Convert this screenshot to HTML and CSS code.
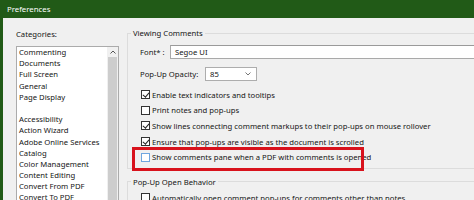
FILE: index.html
```html
<!DOCTYPE html>
<html lang="en">
<head>
    <meta charset="UTF-8">
    <meta name="viewport" content="width=device-width, initial-scale=1.0">
    <title>Preferences</title>
    <link rel="stylesheet" href="styles.css">
</head>
<body>
    <div class="window">
        <div class="titlebar">Preferences</div>
        <div class="content">
            <!-- Left column: category list -->
            <div class="categories">
                <div class="cat-label">Categories:</div>
                <div class="listbox">
                    <ul class="cat-list">
                        <li class="selected">Commenting</li>
                        <li>Documents</li>
                        <li>Full Screen</li>
                        <li>General</li>
                        <li>Page Display</li>
                        <li class="spacer"></li>
                        <li>Accessibility</li>
                        <li>Action Wizard</li>
                        <li>Adobe Online Services</li>
                        <li>Catalog</li>
                        <li>Color Management</li>
                        <li>Content Editing</li>
                        <li>Convert From PDF</li>
                        <li>Convert To PDF</li>
                    </ul>
                    <div class="scrollbar">
                        <div class="scroll-up">
                            <svg width="6" height="4" viewBox="0 0 6 4"><path d="M0.5 3.5 L3 1 L5.5 3.5" fill="none" stroke="#555" stroke-width="1"/></svg>
                        </div>
                        <div class="thumb"></div>
                    </div>
                </div>
            </div>

            <!-- Right column: settings -->
            <div class="settings">
                <fieldset class="group">
                    <legend>Viewing Comments</legend>
                    <div class="field-row font-row">
                        <span class="field-label font-label">Font* :</span>
                        <div class="textbox">Segoe UI</div>
                    </div>
                    <div class="field-row opacity-row">
                        <span class="field-label opacity-label">Pop-Up Opacity:</span>
                        <div class="select">
                            <span>85</span>
                            <svg width="6" height="4" viewBox="0 0 6 4"><path d="M0.5 0.5 L3 3 L5.5 0.5" fill="none" stroke="#666" stroke-width="0.9"/></svg>
                        </div>
                    </div>
                    <label class="check"><span class="box checked"></span>Enable text indicators and tooltips</label>
                    <label class="check"><span class="box"></span>Print notes and pop-ups</label>
                    <label class="check"><span class="box checked"></span>Show lines connecting comment markups to their pop-ups on mouse rollover</label>
                    <label class="check"><span class="box checked"></span>Ensure that pop-ups are visible as the document is scrolled</label>
                    <label class="check marked"><span class="box focus"></span>Show comments pane when a PDF with comments is opened<span class="red-box"></span></label>
                </fieldset>
                <fieldset class="group second">
                    <legend>Pop-Up Open Behavior</legend>
                    <label class="check"><span class="box"></span>Automatically open comment pop-ups for comments other than notes</label>
                </fieldset>
            </div>
        </div>
    </div>
</body>
</html>
```

FILE: styles.css
```css
/* Window frame */
body {
    margin: 0;
    background: #f0f0f0;
    font-family: "Noto Sans", "Segoe UI", sans-serif;
    font-size: 7.7px;
    color: #151515;
    overflow: hidden;
}
.window {
    width: 471px;
    height: 200px;
    border-left: 3px solid #215a17;
    background: #f0f0f0;
    overflow: hidden;
}
.titlebar {
    height: 18px;
    line-height: 18px;
    margin-left: -3px;
    padding-left: 7px;
    background: #215a17;
    color: #fff;
    font-size: 7.8px;
}
.content {
    display: flex;
    padding-top: 10px;
}
/* Category list */
.categories {
    width: 124px;
    flex-shrink: 0;
    padding-left: 13px;
    box-sizing: border-box;
}
.cat-label {
    line-height: 12px;
    margin-bottom: 6px;
}
.listbox {
    display: flex;
    width: 103px;
    height: 160px;
    border: 1px solid #ababab;
    background: #fff;
    box-sizing: border-box;
}
.cat-list {
    flex: 1;
    list-style: none;
    margin: 0;
    padding: 0 0 0 2px;
}
.cat-list li {
    height: 11.2px;
    line-height: 11.2px;
    white-space: nowrap;
}
.scrollbar {
    width: 11px;
    display: flex;
    flex-direction: column;
    background: #f0f0f0;
}
.scroll-up {
    height: 10px;
    display: flex;
    justify-content: center;
    align-items: center;
}
.thumb {
    flex: 1;
    margin: 0 1px;
    background: #cdcdcd;
}
/* Settings groups */
.settings {
    flex: 1;
}
.group {
    margin: 0;
    padding: 0 0 3px 12px;
    border: 1px solid #dcdcdc;
    border-right: none;
    width: 400px;
}
.group legend {
    padding: 0 2px;
    margin-left: -9px;
    line-height: 10px;
}
.group.second {
    margin-top: 8px;
}
.field-row {
    display: flex;
    align-items: center;
}
.field-label {
    flex-shrink: 0;
}
.font-row {
    margin-top: 7px;
}
.font-label {
    width: 30px;
}
.textbox {
    flex: 1;
    height: 14px;
    line-height: 12px;
    padding-left: 4px;
    border: 1px solid #a9a9a9;
    border-top-color: #9a9a9a;
    background: #fff;
    box-sizing: border-box;
}
.opacity-row {
    margin-top: 8px;
}
.opacity-label {
    width: 65px;
}
.select {
    width: 52px;
    height: 14px;
    display: flex;
    align-items: center;
    justify-content: space-between;
    padding: 0 5px 0 4px;
    border: 1px solid #adadad;
    background: #fff;
    box-sizing: border-box;
}
.check {
    position: relative;
    display: flex;
    align-items: center;
    height: 15.6px;
    white-space: nowrap;
}
.opacity-row + .check {
    margin-top: 6px;
}
.box {
    width: 9px;
    height: 9px;
    margin: 0 2px 0 1px;
    border: 1px solid #333;
    background: #fff;
    box-sizing: border-box;
    flex-shrink: 0;
    position: relative;
}
.box.checked::after {
    content: "";
    position: absolute;
    left: 1.5px;
    top: 0;
    width: 2.5px;
    height: 5px;
    border: solid #222;
    border-width: 0 1px 1px 0;
    transform: rotate(40deg);
}
.box.focus {
    border-color: #6fa6df;
}
/* Red annotation drawn over the screenshot */
.red-box {
    position: absolute;
    left: -8px;
    top: -2px;
    width: 232px;
    height: 24px;
    border: 3px solid #d8121c;
    box-sizing: border-box;
}
.second legend + .check {
    margin-top: 3px;
}
```
